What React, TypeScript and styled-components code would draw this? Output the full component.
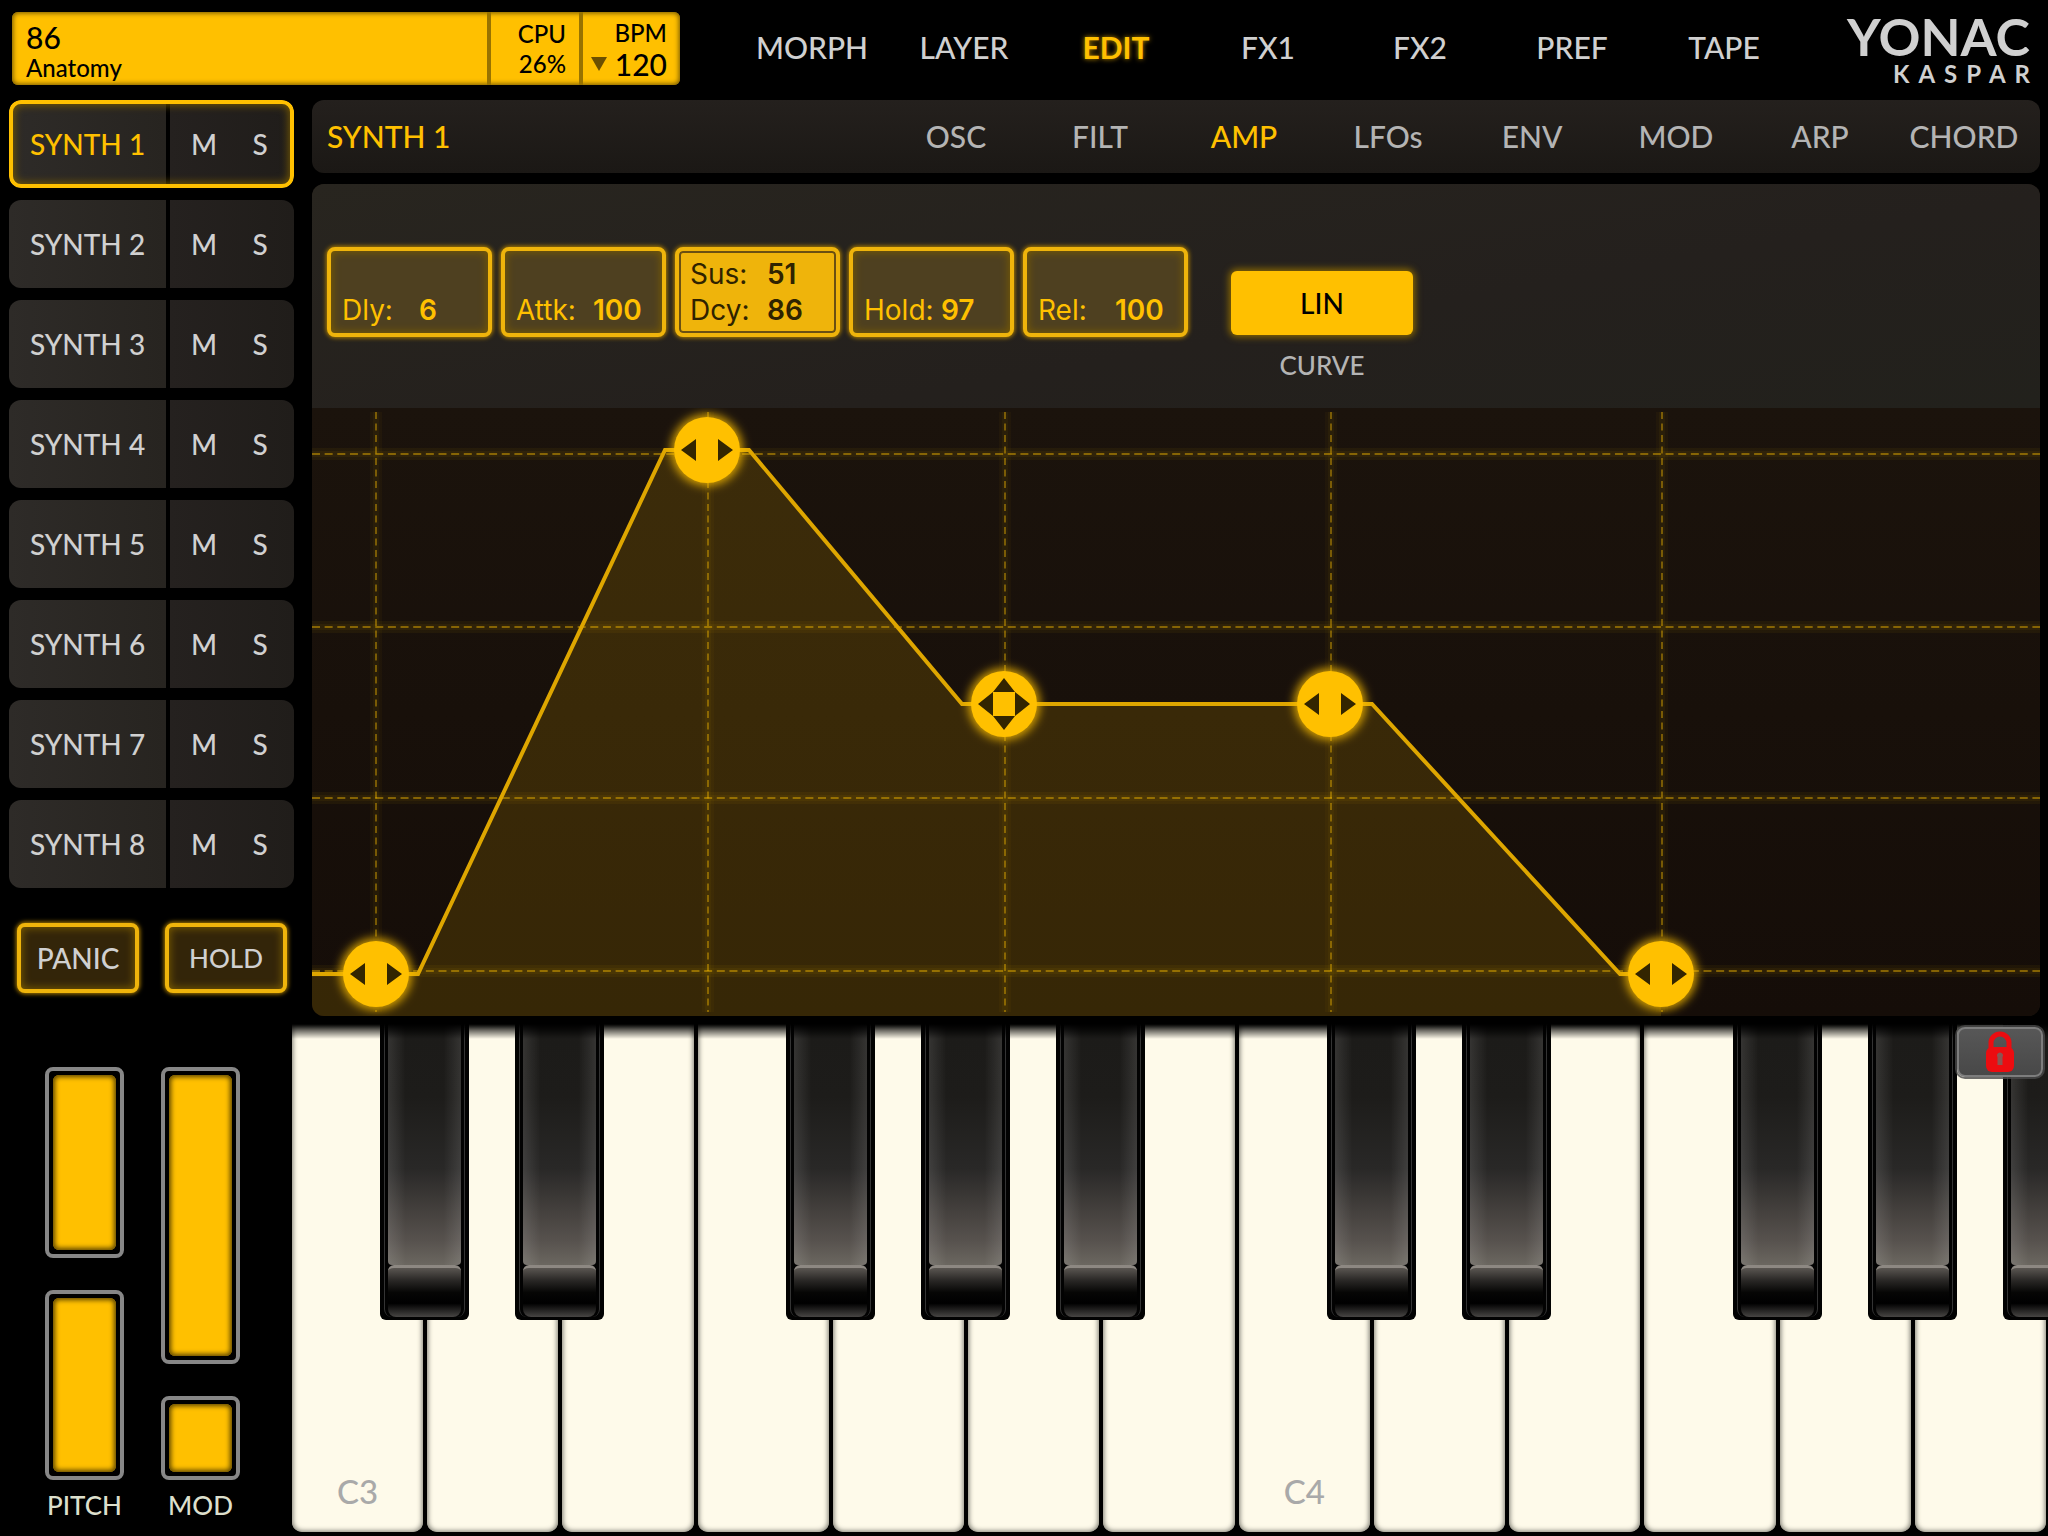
import React, { useState } from "react";
import styled, { createGlobalStyle, css } from "styled-components";

const GOLD = "#ffc000";
const LINE = "#efb40b";

const GlobalStyle = createGlobalStyle`
  *, *::before, *::after { box-sizing: border-box; }
  body { margin: 0; background: #000; }
  button, input, select { font: inherit; color: inherit; }
`;

const Page = styled.div`
  display: flex;
  flex-direction: column;
  min-height: 100vh;
  background: #000;
  color: #d0d0d0;
  font-family: Lato, "Liberation Sans", sans-serif;
  font-weight: 500;
  overflow: hidden;
`;

const Header = styled.header`
  display: flex;
  align-items: flex-start;
  height: 100px;
  padding: 12px 18px 0 12px;
`;

const Display = styled.div`
  flex: 0 1 668px;
  display: flex;
  height: 73px;
  margin-right: 56px;
  border-radius: 6px;
  background: ${GOLD};
  color: #000;
  box-shadow: inset 0 0 5px 1px #6e5200;
`;

const PresetButton = styled.button`
  flex: 1;
  display: flex;
  flex-direction: column;
  justify-content: center;
  padding: 6px 14px 0;
  border: 0;
  background: none;
  text-align: left;
`;

const Meter = styled.div<{ $width: number }>`
  width: ${(p) => p.$width}px;
  display: flex;
  flex-direction: column;
  justify-content: center;
  align-items: flex-end;
  padding-right: 13px;
  border-left: 4px solid #987300;
`;

const MeterText = styled.span<{ $large?: boolean }>`
  display: flex;
  align-items: center;
  gap: 8px;
  font-size: ${(p) => (p.$large ? 30 : 24)}px;
  line-height: ${(p) => (p.$large ? 32 : 30)}px;
`;

const Tabs = styled.nav<{ $count: number; $basis?: number }>`
  flex: ${(p) => (p.$basis ? `0 1 ${p.$basis}px` : "1")};
  display: grid;
  grid-template-columns: repeat(${(p) => p.$count}, 1fr);
`;

const Tab = styled.button<{ $active: boolean; $glow?: boolean }>`
  padding: 0;
  border: 0;
  background: none;
  font-size: 30px;
  line-height: ${(p) => (p.$glow ? 70 : 72)}px;
  white-space: nowrap;
  color: ${(p) => (p.$active ? GOLD : p.$glow ? "#d0d0d0" : "#b4b4b4")};
  ${(p) =>
    p.$active &&
    p.$glow &&
    css`
      font-weight: 700;
      text-shadow: 0 0 5px #c08f00;
    `}
`;

const Brand = styled.div`
  width: 230px;
  display: flex;
  flex-direction: column;
  align-items: flex-end;
`;

const BrandName = styled.span`
  font-size: 52px;
  line-height: 48px;
  font-weight: 700;
`;

const BrandProduct = styled.span`
  font-size: 24px;
  line-height: 28px;
  font-weight: 700;
  letter-spacing: 9px;
  margin-right: -9px;
`;

const Workspace = styled.div`
  display: flex;
  padding: 0 8px 8px 9px;
`;

const Sidebar = styled.aside`
  width: 285px;
  margin-right: 18px;
  display: flex;
  flex-direction: column;
`;

const SynthList = styled.div`
  display: grid;
  gap: 12px;
`;

const SynthRow = styled.div<{ $active: boolean }>`
  display: grid;
  grid-template-columns: 157px 1fr;
  column-gap: 4px;
  height: 88px;
  border-radius: 12px;
  overflow: hidden;
  position: relative;
  ${(p) =>
    p.$active &&
    css`
      &::after {
        content: "";
        position: absolute;
        inset: 0;
        border: 4px solid ${GOLD};
        border-radius: 12px;
        box-shadow: inset 0 0 8px 1px #7a5c00;
        pointer-events: none;
      }
    `}
`;

const SynthName = styled.button<{ $active: boolean }>`
  border: 0;
  padding: 0;
  background: linear-gradient(90deg, #2e2b28, #272420);
  font-size: 28px;
  color: ${(p) => (p.$active ? GOLD : "#d0d0d0")};
`;

const SynthToggles = styled.div`
  display: grid;
  grid-template-columns: 1fr 1fr;
  padding: 0 6px;
  background: linear-gradient(90deg, #25211f, #201d1a);
`;

const Toggle = styled.button`
  border: 0;
  padding: 0;
  background: none;
  font-size: 28px;
`;

const SideActions = styled.div`
  display: flex;
  justify-content: space-between;
  margin-top: 35px;
  padding: 0 7px 0 8px;
`;

const goldFrame = css`
  border: 4px solid ${LINE};
  border-radius: 8px;
  box-shadow: 0 0 4px 1px #b08000, inset 0 0 8px 1px #7a5c00;
`;

const ActionButton = styled.button<{ $size: number }>`
  ${goldFrame}
  width: 122px;
  height: 70px;
  padding: 0;
  background: #332509;
  font-size: ${(p) => p.$size}px;
`;

const Main = styled.main`
  flex: 1;
  min-width: 0;
  display: flex;
  flex-direction: column;
  gap: 11px;
`;

const TitleBar = styled.div`
  display: flex;
  align-items: center;
  justify-content: space-between;
  padding: 0 4px 1px 15px;
  border-radius: 12px;
  background: linear-gradient(#24201d, #1b1815);
`;

const Title = styled.h1`
  margin: 0;
  font-size: 30px;
  font-weight: 500;
  color: ${GOLD};
`;

const Panel = styled.section`
  border-radius: 12px;
  overflow: hidden;
  background: #1a120b;
`;

const Controls = styled.div`
  display: flex;
  align-items: flex-start;
  height: 224px;
  padding: 63px 15px 0;
  background: linear-gradient(170deg, #28251f, #24201d 60%, #22211c);
`;

const Params = styled.div`
  display: flex;
  gap: 9px;
  margin-right: 43px;
  font-family: Inter, Roboto, sans-serif;
`;

const Param = styled.dl<{ $active: boolean }>`
  ${goldFrame}
  width: 165px;
  height: 90px;
  margin: 0;
  padding: 0 0 5px 11px;
  display: grid;
  grid-template-columns: 77px 1fr;
  align-content: end;
  background: #4e4020;
  color: ${GOLD};
  font-size: 28px;
  line-height: 36px;
  font-weight: 400;
  white-space: nowrap;
  ${(p) =>
    p.$active &&
    css`
      background: ${LINE};
      color: #2f2300;
      box-shadow: 0 0 4px 1px #b08000, inset 0 0 0 2px #6a5012;
    `}
`;

const ParamName = styled.dt`
  margin: 0;
`;

const ParamValue = styled.dd`
  margin: 0;
  font-weight: 600;
`;

const CurveField = styled.div`
  display: flex;
  flex-direction: column;
  align-items: center;
  gap: 12px;
  padding-top: 24px;
  color: #b4b4b4;
  font-size: 26px;
  line-height: 36px;
`;

const CurveButton = styled.button`
  width: 182px;
  height: 64px;
  border: 0;
  border-radius: 6px;
  background: ${GOLD};
  color: #000;
  font-size: 28px;
  box-shadow: 0 0 7px 2px #8c6a00;
`;

const Graph = styled.svg`
  display: block;
  width: 100%;
  height: auto;
`;

const Performance = styled.div`
  flex: 1;
  display: flex;
  min-height: 512px;
`;

const Wheels = styled.div`
  width: 290px;
  display: flex;
  gap: 37px;
  padding: 43px 50px 15px 45px;
`;

const Wheel = styled.label`
  position: relative;
  width: 79px;
  display: flex;
  flex-direction: column;
  align-items: center;
  font-size: 26px;
  line-height: 32px;
  color: #dcdfcc;
`;

const WheelTrack = styled.span`
  flex: 1;
  width: 100%;
  display: flex;
  flex-direction: column;
  gap: 32px;
  margin-bottom: 9px;
`;

const WheelPart = styled.span<{ $grow: number }>`
  flex: ${(p) => p.$grow} 1 0;
  display: flex;
  padding: 4px;
  border: 4px solid #878787;
  border-radius: 8px;

  &::before {
    content: "";
    flex: 1;
    border-radius: 6px;
    background: ${GOLD};
    box-shadow: inset 0 0 5px 2px #5a4300;
  }
`;

const WheelInput = styled.input`
  position: absolute;
  inset: 0 0 41px;
  width: 100%;
  margin: 0;
  opacity: 0;
  writing-mode: vertical-lr;
  direction: rtl;
`;

const Keyboard = styled.div`
  flex: 1;
  position: relative;
  display: grid;
  grid-template-columns: repeat(13, 1fr);

  &::before {
    content: "";
    position: absolute;
    inset: 0 0 auto;
    height: 15px;
    z-index: 2;
    background: linear-gradient(#000, #0000);
    pointer-events: none;
  }
`;

const KeySlot = styled.div`
  position: relative;
  display: flex;
  padding: 0 2px 4px;
`;

const WhiteKey = styled.button`
  flex: 1;
  display: flex;
  align-items: flex-end;
  justify-content: center;
  padding: 0 0 21px;
  border: 0;
  border-radius: 0 0 10px 10px;
  background: #fefaea;
  box-shadow: inset 0 0 5px 1px #7c7a70;
  color: #a9a9a9;
  font-size: 33px;
  line-height: 40px;
`;

const BlackKey = styled.button`
  position: absolute;
  z-index: 1;
  top: 0;
  right: -44px;
  width: 89px;
  height: 296px;
  display: flex;
  flex-direction: column;
  padding: 0 4px 3px;
  border: 0;
  border-radius: 0 0 6px 6px;
  background: #020202;
`;

const BlackKeyFrame = styled.span`
  flex: 1;
  display: flex;
  flex-direction: column;
  padding: 0 3px;
  border: solid #343434;
  border-width: 0 1px;
  border-radius: 0 0 8px 8px;
`;

const BlackKeyTop = styled.span`
  height: 241px;
  border-radius: 0 0 4px 4px;
  background:
    linear-gradient(90deg, #ffffff1c, #fff0 24%, #fff0 76%, #ffffff1c),
    linear-gradient(#121110, #1c1b19 12px, #1d1c1a 30%, #292827 60%, #45413e 78%, #57524e 90%, #6b6760);
`;

const BlackKeyFront = styled.span`
  flex: 1;
  border-top: 3px solid #8d8882;
  border-radius: 6px 6px 8px 8px;
  background: linear-gradient(#5a5651, #2a2826 25%, #060605 50%, #000 72%, #474543);
`;

const LockButton = styled.button`
  position: absolute;
  z-index: 3;
  top: 3px;
  right: 5px;
  width: 86px;
  height: 50px;
  display: flex;
  align-items: center;
  justify-content: center;
  padding: 0;
  border: 2px solid #7d7d7d;
  border-radius: 8px;
  background: linear-gradient(#575757, #484848);
  box-shadow: 0 0 0 2px #4a4a4acc;
`;

const MAIN_TABS = ["MORPH", "LAYER", "EDIT", "FX1", "FX2", "PREF", "TAPE"];
const EDIT_TABS = ["OSC", "FILT", "AMP", "LFOs", "ENV", "MOD", "ARP", "CHORD"];
const SYNTHS = [1, 2, 3, 4, 5, 6, 7, 8];
const PARAMS: [string, number][][] = [
  [["Dly:", 6]],
  [["Attk:", 100]],
  [["Sus:", 51], ["Dcy:", 86]],
  [["Hold:", 97]],
  [["Rel:", 100]],
];
const NOTES = ["C3", "D3", "E3", "F3", "G3", "A3", "B3", "C4", "D4", "E4", "F4", "G4", "A4"];
const GRID_X = [64, 396, 693, 1019, 1350];
const GRID_Y = [46, 219, 390, 563];
const NODES: { x: number; y: number; both?: boolean }[] = [
  { x: 64, y: 566 },
  { x: 395, y: 42 },
  { x: 692, y: 296, both: true },
  { x: 1018, y: 296 },
  { x: 1349, y: 566 },
];
const SHAPE = "M0 566H106L353 42H437L650 296H1060L1308 566H1349";

function EnvelopeGraph() {
  return (
    <Graph viewBox="0 0 1728 608" role="img" aria-label="Amplitude envelope">
      <defs>
        <filter id="glow" x="-50%" y="-50%" width="200%" height="200%">
          <feGaussianBlur stdDeviation="5" />
        </filter>
        <linearGradient id="ground" x1="0" y1="0" x2="0" y2="1">
          <stop offset="0" stopColor="#1b130c" />
          <stop offset="1" stopColor="#150d08" />
        </linearGradient>
      </defs>
      <rect width="1728" height="608" fill="url(#ground)" />
      <path d={`${SHAPE}V608H0Z`} fill={GOLD} fillOpacity="0.145" />
      <g stroke={GOLD}>
        {GRID_Y.map((y) => (
          <g key={y}>
            <path d={`M0 ${y}H1728`} strokeWidth="12" strokeOpacity="0.05" />
            <path d={`M0 ${y}H1728`} strokeWidth="6" strokeOpacity="0.05" />
            <path d={`M0 ${y}H1728`} strokeWidth="2" strokeOpacity="0.42" strokeDasharray="8 4.65" />
          </g>
        ))}
        {GRID_X.map((x) => (
          <g key={x}>
            <path d={`M${x} 4V604`} strokeWidth="12" strokeOpacity="0.03" />
            <path d={`M${x} 4V604`} strokeWidth="6" strokeOpacity="0.04" />
            <path d={`M${x} 4V604`} strokeWidth="2" strokeOpacity="0.38" strokeDasharray="7 4.5" />
          </g>
        ))}
      </g>
      <path d={SHAPE} fill="none" stroke="#dea600" strokeWidth="4" />
      {NODES.map((n) => (
        <g key={n.x} transform={`translate(${n.x} ${n.y})`}>
          <circle r="36" fill={GOLD} fillOpacity="0.8" filter="url(#glow)" />
          <circle r="33" fill={GOLD} />
          <g fill="#332500">
            {n.both ? (
              <path d="M-26 0L-11 -12V12ZM26 0L11 -12V12ZM0 -26L-11 -12H11ZM0 26L-11 12H11Z" />
            ) : (
              <path d="M-26 0L-11 -11V11ZM26 0L11 -11V11Z" />
            )}
          </g>
        </g>
      ))}
    </Graph>
  );
}

export default function App() {
  const [mainTab, setMainTab] = useState("EDIT");
  const [editTab, setEditTab] = useState("AMP");
  const [synth, setSynth] = useState(1);

  return (
    <Page>
      <GlobalStyle />
      <Header>
        <Display>
          <PresetButton type="button">
            <MeterText $large>86</MeterText>
            <MeterText>Anatomy</MeterText>
          </PresetButton>
          <Meter $width={92}>
            <MeterText>CPU</MeterText>
            <MeterText>26%</MeterText>
          </Meter>
          <Meter $width={101}>
            <MeterText>BPM</MeterText>
            <MeterText $large>
              <svg width="16" height="14" viewBox="0 0 16 14" aria-hidden="true">
                <path d="M0 0H16L8 14Z" fill="#6b5000" />
              </svg>
              120
            </MeterText>
          </Meter>
        </Display>
        <Tabs $count={7} aria-label="Sections">
          {MAIN_TABS.map((t) => (
            <Tab key={t} type="button" $glow $active={t === mainTab} onClick={() => setMainTab(t)}>
              {t}
            </Tab>
          ))}
        </Tabs>
        <Brand>
          <BrandName>YONAC</BrandName>
          <BrandProduct>KASPAR</BrandProduct>
        </Brand>
      </Header>

      <Workspace>
        <Sidebar>
          <SynthList>
            {SYNTHS.map((n) => (
              <SynthRow key={n} $active={n === synth}>
                <SynthName type="button" $active={n === synth} onClick={() => setSynth(n)}>
                  SYNTH {n}
                </SynthName>
                <SynthToggles>
                  <Toggle type="button">M</Toggle>
                  <Toggle type="button">S</Toggle>
                </SynthToggles>
              </SynthRow>
            ))}
          </SynthList>
          <SideActions>
            <ActionButton type="button" $size={28}>PANIC</ActionButton>
            <ActionButton type="button" $size={26}>HOLD</ActionButton>
          </SideActions>
        </Sidebar>

        <Main>
          <TitleBar>
            <Title>SYNTH {synth}</Title>
            <Tabs $count={8} $basis={1152} aria-label="Synth pages">
              {EDIT_TABS.map((t) => (
                <Tab key={t} type="button" $active={t === editTab} onClick={() => setEditTab(t)}>
                  {t}
                </Tab>
              ))}
            </Tabs>
          </TitleBar>
          <Panel>
            <Controls>
              <Params>
                {PARAMS.map((rows) => (
                  <Param key={rows[0][0]} $active={rows.length > 1}>
                    {rows.map(([name, value]) => (
                      <React.Fragment key={name}>
                        <ParamName>{name}</ParamName>
                        <ParamValue>{value}</ParamValue>
                      </React.Fragment>
                    ))}
                  </Param>
                ))}
              </Params>
              <CurveField>
                <CurveButton type="button" aria-describedby="curve">LIN</CurveButton>
                <span id="curve">CURVE</span>
              </CurveField>
            </Controls>
            <EnvelopeGraph />
          </Panel>
        </Main>
      </Workspace>

      <Performance>
        <Wheels>
          <Wheel>
            <WheelTrack>
              <WheelPart $grow={1} />
              <WheelPart $grow={1} />
            </WheelTrack>
            PITCH
            <WheelInput type="range" defaultValue={50} />
          </Wheel>
          <Wheel>
            <WheelTrack>
              <WheelPart $grow={281} />
              <WheelPart $grow={68} />
            </WheelTrack>
            MOD
            <WheelInput type="range" defaultValue={15} />
          </Wheel>
        </Wheels>
        <Keyboard>
          {NOTES.map((note) => (
            <KeySlot key={note}>
              <WhiteKey type="button" aria-label={note}>
                {note[0] === "C" ? note : null}
              </WhiteKey>
              {"CDFGA".includes(note[0]) && (
                <BlackKey type="button" aria-label={`${note[0]}#${note[1]}`}>
                  <BlackKeyFrame>
                    <BlackKeyTop />
                    <BlackKeyFront />
                  </BlackKeyFrame>
                </BlackKey>
              )}
            </KeySlot>
          ))}
          <LockButton type="button" aria-label="Lock keyboard">
            <svg width="30" height="42" viewBox="0 0 30 42" aria-hidden="true">
              <path d="M6 19V12a9 9 0 0 1 18 0V19" fill="none" stroke="#ec0c10" strokeWidth="5" />
              <rect x="1" y="16" width="28" height="25" rx="6" fill="#ec0c10" />
              <path d="M15 21.500a3 3 0 0 1 2.500 4.700V34H12.500V26.200A3 3 0 0 1 15 21.500Z" fill="#8a5552" />
            </svg>
          </LockButton>
        </Keyboard>
      </Performance>
    </Page>
  );
}
